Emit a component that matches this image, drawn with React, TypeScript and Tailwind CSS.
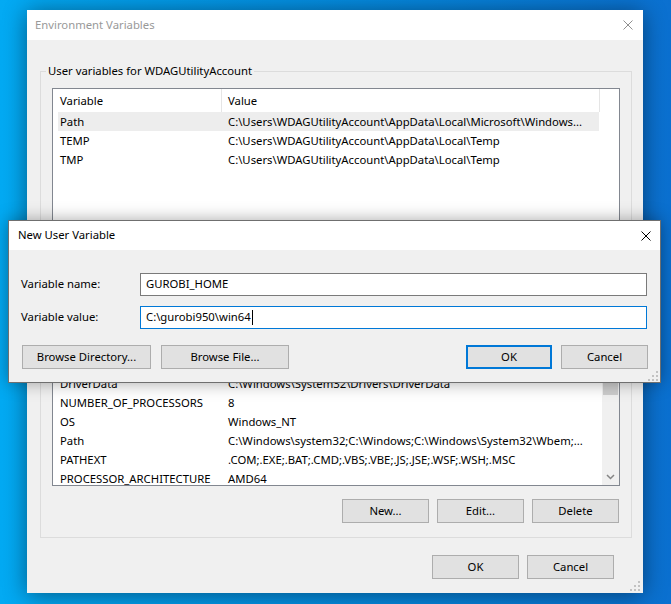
import React from 'react'

type Row = { name: string; value: string }

const userRows: Row[] = [
  { name: 'Path', value: 'C:\\Users\\WDAGUtilityAccount\\AppData\\Local\\Microsoft\\Windows...' },
  { name: 'TEMP', value: 'C:\\Users\\WDAGUtilityAccount\\AppData\\Local\\Temp' },
  { name: 'TMP', value: 'C:\\Users\\WDAGUtilityAccount\\AppData\\Local\\Temp' }
]

const systemRows: Row[] = [
  { name: 'ComSpec', value: 'C:\\Windows\\system32\\cmd.exe' },
  { name: 'DriverData', value: 'C:\\Windows\\System32\\Drivers\\DriverData' },
  { name: 'NUMBER_OF_PROCESSORS', value: '8' },
  { name: 'OS', value: 'Windows_NT' },
  { name: 'Path', value: 'C:\\Windows\\system32;C:\\Windows;C:\\Windows\\System32\\Wbem;...' },
  { name: 'PATHEXT', value: '.COM;.EXE;.BAT;.CMD;.VBS;.VBE;.JS;.JSE;.WSF;.WSH;.MSC' },
  { name: 'PROCESSOR_ARCHITECTURE', value: 'AMD64' }
]

function CloseIcon({ color }: { color: string }) {
  return (
    <svg width="10" height="10" viewBox="0 0 10 10">
      <path d="M0.5 0.5 L9.5 9.5 M9.5 0.5 L0.5 9.5" stroke={color} strokeWidth="1" fill="none" />
    </svg>
  )
}

function Grip() {
  return (
    <svg width="10" height="10" viewBox="0 0 10 10">
      <rect x="8" y="0" width="2" height="2" fill="#c2c2c2" />
      <rect x="4" y="4" width="2" height="2" fill="#c2c2c2" />
      <rect x="8" y="4" width="2" height="2" fill="#c2c2c2" />
      <rect x="0" y="8" width="2" height="2" fill="#c2c2c2" />
      <rect x="4" y="8" width="2" height="2" fill="#c2c2c2" />
      <rect x="8" y="8" width="2" height="2" fill="#c2c2c2" />
    </svg>
  )
}

function Btn({ children, w, focused = false }: { children: React.ReactNode; w: string; focused?: boolean }) {
  return (
    <div
      className={
        focused
          ? `flex h-[24px] ${w} items-center justify-center border-2 border-[#0078d7] bg-[#e1e1e1]`
          : `flex h-[24px] ${w} items-center justify-center border border-[#adadad] bg-[#e1e1e1]`
      }
    >
      {children}
    </div>
  )
}

function ListView({ rows, selected, scrollbar = false }: { rows: Row[]; selected?: number; scrollbar?: boolean }) {
  return (
    <div className="mt-[9px] flex h-[155px] overflow-hidden border border-[#828790] bg-white">
      <div className="min-w-0 flex-1">
        <div className="flex h-[23px]">
          <div className="flex w-[169px] items-center border-r border-[#e5e5e5] pl-[7px] pt-[1px]">Variable</div>
          <div className="flex w-[378px] shrink-0 items-center border-r border-[#e5e5e5] pl-[6px] pt-[1px]">Value</div>
        </div>
        {rows.map((r, i) => (
          <div
            key={r.name}
            className={
              i === selected
                ? 'ml-[5px] flex h-[19px] w-[541px] items-center bg-[#ededed] pt-[2px]'
                : 'ml-[5px] flex h-[19px] w-[541px] items-center pt-[2px]'
            }
          >
            <div className="w-[164px] shrink-0 overflow-hidden pl-[2px] whitespace-nowrap">{r.name}</div>
            <div className="min-w-0 flex-1 overflow-hidden pl-[6px] whitespace-nowrap">{r.value}</div>
          </div>
        ))}
      </div>
      {scrollbar && (
        <div className="flex w-[17px] shrink-0 flex-col bg-[#f0f0f0]">
          <div className="flex h-[17px] items-center justify-center">
            <svg width="9" height="6" viewBox="0 0 9 6">
              <path d="M1 5 L4.5 1.5 L8 5" stroke="#858585" strokeWidth="1.5" fill="none" />
            </svg>
          </div>
          <div className="mx-[1px] h-[46px] bg-[#cdcdcd]" />
          <div className="flex-1" />
          <div className="flex h-[17px] items-center justify-center">
            <svg width="9" height="6" viewBox="0 0 9 6">
              <path d="M1 1 L4.5 4.5 L8 1" stroke="#858585" strokeWidth="1.5" fill="none" />
            </svg>
          </div>
        </div>
      )}
    </div>
  )
}

function GroupBox({ label, className = '', children }: { label: string; className?: string; children: React.ReactNode }) {
  return (
    <div className={`border border-[#dcdcdc] px-[11px] pb-[14px] ${className}`}>
      <div className="-mt-[9px] -ml-[6px] w-fit bg-[#f0f0f0] px-[2px] leading-[16px]">{label}</div>
      {children}
    </div>
  )
}

function EditButtons() {
  return (
    <div className="mt-[13px] flex justify-end gap-[8px] pr-[1px]">
      <Btn w="w-[87px]">New...</Btn>
      <Btn w="w-[87px]">Edit...</Btn>
      <Btn w="w-[87px]">Delete</Btn>
    </div>
  )
}

export default function App() {
  return (
    <div className="relative h-[604px] w-[671px] overflow-hidden bg-linear-to-r from-[#03aaf3] to-[#0b70d0] font-['Noto_Sans','Liberation_Sans',Arial,sans-serif] text-[11.3px] text-black">
      {/* Environment Variables window */}
      <div className="absolute left-[27px] top-[10px] flex h-[583px] w-[616px] flex-col bg-[#f0f0f0] shadow-[0_2px_22px_rgba(0,0,0,0.45)]">
        <div className="flex h-[30px] shrink-0 items-center justify-between bg-white pl-[8px] pr-[10px]">
          <span className="text-[#999999]">Environment Variables</span>
          <CloseIcon color="#8f8f8f" />
        </div>
        <div className="flex flex-1 flex-col pl-[13px] pr-[11px] pt-[31px]">
          <GroupBox label="User variables for WDAGUtilityAccount">
            <ListView rows={userRows} selected={0} />
            <EditButtons />
          </GroupBox>
          <GroupBox label="System variables" className="mt-[19px]">
            <ListView rows={systemRows} scrollbar />
            <EditButtons />
          </GroupBox>
          <div className="mt-[17px] flex justify-end gap-[8px] pr-[18px]">
            <Btn w="w-[87px]">OK</Btn>
            <Btn w="w-[87px]">Cancel</Btn>
          </div>
        </div>
        <div className="absolute bottom-[2px] right-[3px]">
          <Grip />
        </div>
      </div>

      {/* New User Variable dialog */}
      <div className="absolute left-[8px] top-[220px] flex h-[163px] w-[653px] flex-col border border-[#6f6f6f] bg-[#f0f0f0] shadow-[0_0_16px_rgba(0,0,0,0.35)]">
        <div className="flex h-[29px] shrink-0 items-center justify-between bg-white pl-[9px] pr-[9px]">
          <span>New User Variable</span>
          <CloseIcon color="#000000" />
        </div>
        <div className="flex flex-1 flex-col px-[12px] pt-[23px]">
          <div className="flex items-center">
            <div className="w-[119px]">Variable name:</div>
            <div className="flex h-[23px] w-[507px] items-center border border-[#7a7a7a] bg-white pl-[5px]">GUROBI_HOME</div>
          </div>
          <div className="mt-[10px] flex items-center">
            <div className="w-[119px]">Variable value:</div>
            <div className="flex h-[23px] w-[507px] items-center border border-[#0078d7] bg-white pl-[5px]">
              C:\gurobi950\win64
              <span className="ml-px h-[15px] w-px bg-black" />
            </div>
          </div>
          <div className="mt-[16px] flex justify-between">
            <div className="ml-px flex gap-[10px]">
              <Btn w="w-[129px]">Browse Directory...</Btn>
              <Btn w="w-[128px]">Browse File...</Btn>
            </div>
            <div className="flex gap-[9px]">
              <Btn w="w-[86px]" focused>
                OK
              </Btn>
              <Btn w="w-[87px]">Cancel</Btn>
            </div>
          </div>
        </div>
        <div className="absolute bottom-[1px] right-[2px]">
          <Grip />
        </div>
      </div>
    </div>
  )
}
